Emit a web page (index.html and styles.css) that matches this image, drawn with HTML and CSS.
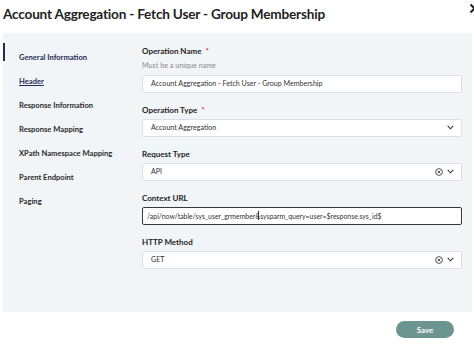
FILE: index.html
```html
<!DOCTYPE html>
<html>
<head>
<meta charset="utf-8">
<link rel="stylesheet" href="styles.css">
</head>
<body>
<div class="dialog">
  <header class="title-bar">
    <h1 class="title">Account Aggregation - Fetch User - Group Membership</h1>
    <span class="close"><svg width="11" height="11" viewBox="0 0 11 11"><path d="M1.5 1.5 L9.5 9.5 M9.5 1.5 L1.5 9.5" stroke="#222" stroke-width="2" fill="none"/></svg></span>
  </header>
  <div class="panel">
    <nav class="nav">
      <a class="nav-item active">General Information</a>
      <a class="nav-item link">Header</a>
      <a class="nav-item">Response Information</a>
      <a class="nav-item">Response Mapping</a>
      <a class="nav-item">XPath Namespace Mapping</a>
      <a class="nav-item">Parent Endpoint</a>
      <a class="nav-item">Paging</a>
    </nav>
    <div class="form">
      <div class="field">
        <div class="label">Operation Name <span class="req">*</span></div>
        <div class="hint">Must be a unique name</div>
        <div class="control">Account Aggregation - Fetch User - Group Membership</div>
      </div>
      <div class="field">
        <div class="label">Operation Type <span class="req">*</span></div>
        <div class="control select">
          <span class="value">Account Aggregation</span>
          <span class="icons"><svg class="chev" width="7" height="5" viewBox="0 0 7 5"><path d="M0.7 0.8 L3.5 3.8 L6.3 0.8" stroke="#333" stroke-width="1.1" fill="none"/></svg></span>
        </div>
      </div>
      <div class="field">
        <div class="label">Request Type</div>
        <div class="control select">
          <span class="value">API</span>
          <span class="icons">
            <svg class="clear" width="8" height="8" viewBox="0 0 8 8"><circle cx="4" cy="4" r="3.4" stroke="#444" stroke-width="0.9" fill="none"/><path d="M2.6 2.6 L5.4 5.4 M5.4 2.6 L2.6 5.4" stroke="#444" stroke-width="0.9"/></svg>
            <svg class="chev" width="7" height="5" viewBox="0 0 7 5"><path d="M0.7 0.8 L3.5 3.8 L6.3 0.8" stroke="#333" stroke-width="1.1" fill="none"/></svg>
          </span>
        </div>
      </div>
      <div class="field">
        <div class="label">Context URL</div>
        <div class="control focused">/api/now/table/sys_user_grmember&amp;<span class="caret"></span>sysparm_query=user=$response.sys_id$</div>
      </div>
      <div class="field">
        <div class="label">HTTP Method</div>
        <div class="control select">
          <span class="value">GET</span>
          <span class="icons">
            <svg class="clear" width="8" height="8" viewBox="0 0 8 8"><circle cx="4" cy="4" r="3.4" stroke="#444" stroke-width="0.9" fill="none"/><path d="M2.6 2.6 L5.4 5.4 M5.4 2.6 L2.6 5.4" stroke="#444" stroke-width="0.9"/></svg>
            <svg class="chev" width="7" height="5" viewBox="0 0 7 5"><path d="M0.7 0.8 L3.5 3.8 L6.3 0.8" stroke="#333" stroke-width="1.1" fill="none"/></svg>
          </span>
        </div>
      </div>
    </div>
  </div>
  <footer class="footer">
    <button class="save">Save</button>
  </footer>
</div>
</body>
</html>
```
FILE: styles.css
```css
html, body {
  margin: 0;
  padding: 0;
  background: #ffffff;
  overflow: hidden;
}
body {
  width: 474px;
  height: 345px;
  font-family: "Lato", "Noto Sans", sans-serif;
  color: #2a2a2a;
}
.dialog {
  display: flex;
  flex-direction: column;
  width: 474px;
}
.title-bar {
  height: 33px;
  display: flex;
  align-items: flex-start;
  justify-content: space-between;
  position: relative;
}
.title {
  margin: 4px 0 0 3px;
  font-size: 13.6px;
  letter-spacing: -0.2px;
  line-height: 20px;
  font-weight: 700;
  color: #222;
}
.close {
  position: absolute;
  right: -6px;
  top: 3px;
  display: block;
  width: 11px;
  height: 11px;
}
.close svg { display: block; }
.panel {
  margin: 0 2px 0 3px;
  height: 279px;
  background: #f2f5f8;
  display: flex;
}
.nav {
  width: 123px;
  padding: 12px 0 0 16px;
  display: flex;
  flex-direction: column;
}
.nav-item {
  position: relative;
  font-size: 7.6px;
  font-weight: 700;
  line-height: 24px;
  height: 24px;
  color: #2a2a2a;
  white-space: nowrap;
}
.nav-item.active { color: #1f2b58; }
.nav-item.active::before {
  content: "";
  position: absolute;
  left: -16px;
  top: -2px;
  width: 2px;
  height: 18px;
  background: #1f2b58;
}
.nav-item.link {
  color: #1f2b58;
  text-decoration: underline;
}
.form {
  flex: 1;
  padding: 13px 10px 0 0;
  display: flex;
  flex-direction: column;
}
.field {
  display: flex;
  flex-direction: column;
  margin-bottom: 12px;
}
.label {
  font-size: 8px;
  font-weight: 700;
  line-height: 10px;
  margin-bottom: 4px;
  color: #222;
}
.req {
  color: #d6306a;
  margin-left: 2px;
}
.hint {
  font-size: 7.2px;
  line-height: 11px;
  color: #8a8a8a;
  margin: 0 0 3.6px;
}
.control {
  height: 18px;
  box-sizing: border-box;
  border: 1px solid #dcdfe4;
  border-radius: 2px;
  background: #fff;
  font-size: 7.1px;
  line-height: 16px;
  padding: 0 8px;
  color: #333;
  white-space: nowrap;
  overflow: hidden;
}
.select {
  display: flex;
  align-items: center;
  justify-content: space-between;
  padding-right: 7px;
}
.icons {
  display: flex;
  align-items: center;
  gap: 4px;
}
.icons svg { display: block; }
.focused {
  border-color: #3a3a3a;
  padding-left: 4px;
  font-size: 6.9px;
}
.caret {
  display: inline-block;
  width: 0.6px;
  height: 9px;
  background: #333;
  margin-left: -2px;
  margin-right: 1.4px;
  vertical-align: -1px;
}
.footer {
  display: flex;
  justify-content: flex-end;
  padding: 9px 20px 0 0;
}
.save {
  width: 58px;
  height: 17px;
  border: none;
  border-radius: 9px;
  background: #6d9590;
  color: #fff;
  font-family: "Lato", "Noto Sans", sans-serif;
  font-size: 8px;
  font-weight: 700;
  padding: 0;
}
```
